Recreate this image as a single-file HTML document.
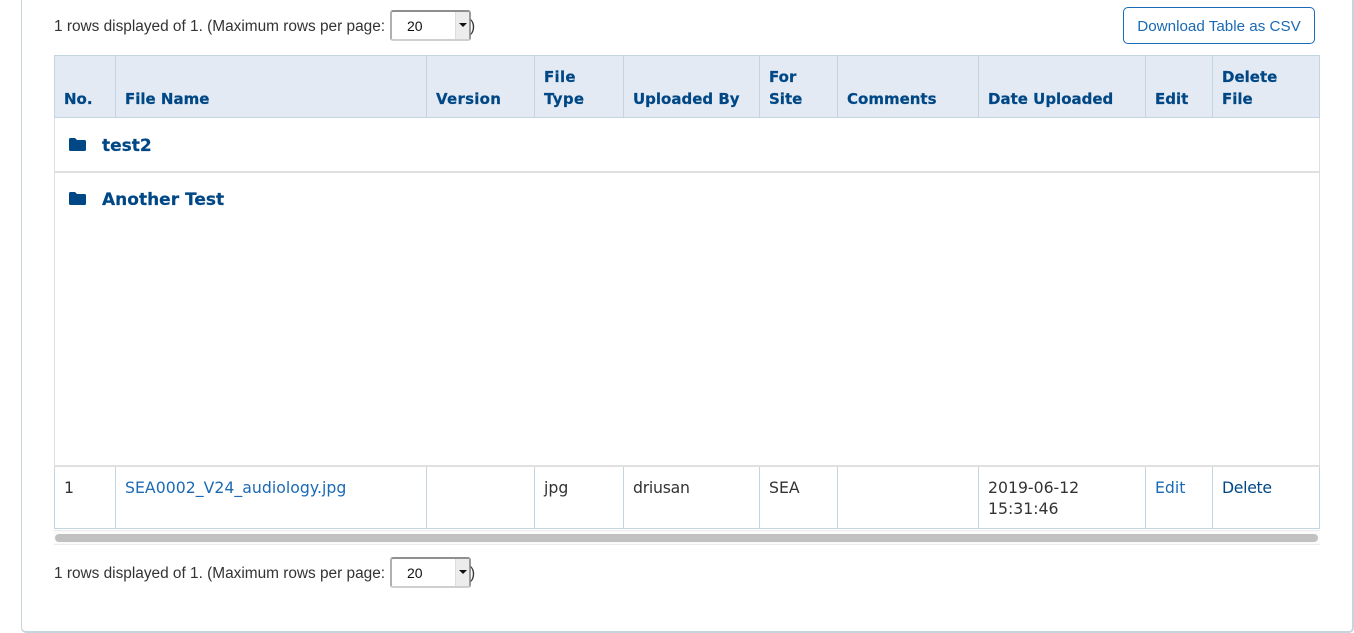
<!DOCTYPE html>
<html>
<head>
<meta charset="utf-8">
<style>
html,body{margin:0;padding:0;background:#fff;}
body{width:1354px;height:633px;position:relative;overflow:hidden;font-family:"DejaVu Sans",sans-serif;}
.a{position:absolute;white-space:nowrap;}
.card{position:absolute;left:21px;top:-10px;width:1330px;height:640px;border:1px solid #c6d4de;border-bottom:2px solid #c6d4de;border-right:2px solid #c6d4de;border-radius:5px;background:#fff;}
.info{font-family:"Liberation Sans",sans-serif;font-size:15.4px;color:#333;line-height:20px;}
.sel{position:absolute;left:390px;width:81px;height:31px;box-sizing:border-box;border:2px solid #8f8f8f;border-bottom-color:#cfcfcf;border-left-color:#b0b0b0;border-right-color:#9a9a9a;border-radius:3px;background:#fff;font-family:"Liberation Sans",sans-serif;font-size:14px;color:#111;}
.sel span{position:absolute;left:15px;top:6px;line-height:16px;}
.sel i{position:absolute;right:0;top:0;width:14px;height:100%;background:#ececec;border-left:1px solid #ddd;box-sizing:border-box;}
.sel i:after{content:"";position:absolute;left:3px;top:11px;border-left:4px solid transparent;border-right:4px solid transparent;border-top:4px solid #111;}
.hd{position:absolute;left:54px;top:55px;width:1266px;height:63px;background:#e3eaf3;box-sizing:border-box;border:1px solid #c5d5e0;border-bottom:1px solid #c5d5e0;}
.v{position:absolute;width:1px;background:#c5d5e0;}
.th{position:absolute;font-weight:bold;font-size:15px;line-height:22px;color:#004785;white-space:nowrap;-webkit-text-stroke:.2px #004785;}
.td{position:absolute;font-size:15.7px;line-height:21px;color:#333;white-space:nowrap;}
.lk{color:#1b6ab5;}
.dk{color:#004785;}
.fold{position:absolute;font-weight:bold;font-size:17px;line-height:22px;color:#004785;white-space:nowrap;left:102px;-webkit-text-stroke:.2px #004785;}
svg{position:absolute;}
</style>
</head>
<body>
<div class="card"></div>

<div class="a info" style="left:54px;top:17px;">1 rows displayed of 1. (Maximum rows per page:</div>
<div class="sel" style="top:10px;"><span>20</span><i></i></div>
<div class="a info" style="left:470px;top:17px;">)</div>

<div class="a" style="left:1123px;top:7px;width:192px;height:37px;box-sizing:border-box;border:1px solid #1b6ab5;border-radius:5px;color:#1b6ab5;font-family:'Liberation Sans',sans-serif;font-size:15.2px;line-height:37px;text-align:center;">Download Table as CSV</div>

<div class="hd"></div>
<div class="a" style="left:54px;top:118px;width:1px;height:411px;background:#dcdfe2;"></div>
<div class="a" style="left:1319px;top:118px;width:1px;height:411px;background:#dcdfe2;"></div>

<div class="v" style="left:115px;top:55px;height:62px;"></div>
<div class="v" style="left:426px;top:55px;height:62px;"></div>
<div class="v" style="left:534px;top:55px;height:62px;"></div>
<div class="v" style="left:623px;top:55px;height:62px;"></div>
<div class="v" style="left:759px;top:55px;height:62px;"></div>
<div class="v" style="left:837px;top:55px;height:62px;"></div>
<div class="v" style="left:978px;top:55px;height:62px;"></div>
<div class="v" style="left:1145px;top:55px;height:62px;"></div>
<div class="v" style="left:1212px;top:55px;height:62px;"></div>

<div class="th" style="left:64px;top:88px;">No.</div>
<div class="th" style="left:125px;top:88px;">File Name</div>
<div class="th" style="left:436px;top:88px;letter-spacing:.25px;">Version</div>
<div class="th" style="left:544px;top:66px;letter-spacing:.3px;">File<br>Type</div>
<div class="th" style="left:633px;top:88px;">Uploaded By</div>
<div class="th" style="left:769px;top:66px;">For<br>Site</div>
<div class="th" style="left:847px;top:88px;">Comments</div>
<div class="th" style="left:988px;top:88px;">Date Uploaded</div>
<div class="th" style="left:1155px;top:88px;">Edit</div>
<div class="th" style="left:1222px;top:66px;">Delete<br>File</div>

<svg style="left:69px;top:138px;" width="17" height="13" viewBox="0 0 17 13"><path d="M1.5 0H6L8 2H15.5A1.5 1.5 0 0 1 17 3.5V11.5A1.5 1.5 0 0 1 15.5 13H1.5A1.5 1.5 0 0 1 0 11.5V1.5A1.5 1.5 0 0 1 1.5 0Z" fill="#004785"/></svg>
<div class="fold" style="top:135px;">test2</div>
<div class="a" style="left:55px;top:171px;width:1264px;height:2px;background:#e0e0e0;"></div>

<svg style="left:69px;top:192px;" width="17" height="13" viewBox="0 0 17 13"><path d="M1.5 0H6L8 2H15.5A1.5 1.5 0 0 1 17 3.5V11.5A1.5 1.5 0 0 1 15.5 13H1.5A1.5 1.5 0 0 1 0 11.5V1.5A1.5 1.5 0 0 1 1.5 0Z" fill="#004785"/></svg>
<div class="fold" style="top:189px;">Another Test</div>
<div class="a" style="left:55px;top:465px;width:1264px;height:2px;background:#e0e0e0;"></div>

<div class="v" style="left:115px;top:467px;height:61px;"></div>
<div class="v" style="left:426px;top:467px;height:61px;"></div>
<div class="v" style="left:534px;top:467px;height:61px;"></div>
<div class="v" style="left:623px;top:467px;height:61px;"></div>
<div class="v" style="left:759px;top:467px;height:61px;"></div>
<div class="v" style="left:837px;top:467px;height:61px;"></div>
<div class="v" style="left:978px;top:467px;height:61px;"></div>
<div class="v" style="left:1145px;top:467px;height:61px;"></div>
<div class="v" style="left:1212px;top:467px;height:61px;"></div>
<div class="v" style="left:54px;top:467px;height:62px;"></div>
<div class="v" style="left:1319px;top:467px;height:62px;"></div>
<div class="a" style="left:54px;top:528px;width:1266px;height:1px;background:#c5d5e0;"></div>

<div class="td" style="left:64px;top:477px;">1</div>
<div class="td lk" style="left:125px;top:477px;letter-spacing:.03px;">SEA0002_V24_audiology.jpg</div>
<div class="td" style="left:544px;top:477px;">jpg</div>
<div class="td" style="left:633px;top:477px;letter-spacing:-.25px;">driusan</div>
<div class="td" style="left:769px;top:477px;">SEA</div>
<div class="td" style="left:988px;top:477px;">2019-06-12<br>15:31:46</div>
<div class="td lk" style="left:1155px;top:477px;">Edit</div>
<div class="td dk" style="left:1222px;top:477px;letter-spacing:-.3px;">Delete</div>

<div class="a" style="left:54px;top:530px;width:1266px;height:15px;box-sizing:border-box;background:#fafafa;border-top:1px solid #ececec;border-bottom:1px solid #ececec;"></div>
<div class="a" style="left:55px;top:534px;width:1263px;height:8px;border-radius:4px;background:#c1c1c1;"></div>

<div class="a info" style="left:54px;top:564px;">1 rows displayed of 1. (Maximum rows per page:</div>
<div class="sel" style="top:557px;"><span>20</span><i></i></div>
<div class="a info" style="left:470px;top:564px;">)</div>
</body>
</html>
